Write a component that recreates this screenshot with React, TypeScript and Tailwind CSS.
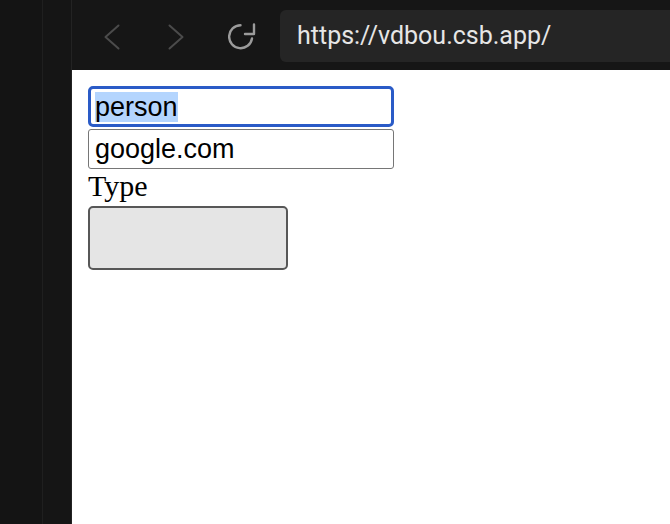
import React from 'react'

// Embedded-preview chrome: dark side rail, browser toolbar, and the page body
// with two text fields, a "Type" label and an empty select box.

function BackIcon() {
  return (
    <svg width="16" height="26" viewBox="0 0 16 26" fill="none" stroke="#4b4b4b" strokeWidth="2" strokeLinecap="round" strokeLinejoin="round">
      <polyline points="14.5,1.5 1.5,13 14.5,24.5" />
    </svg>
  )
}

function ForwardIcon() {
  return (
    <svg width="16" height="26" viewBox="0 0 16 26" fill="none" stroke="#4b4b4b" strokeWidth="2" strokeLinecap="round" strokeLinejoin="round">
      <polyline points="1.5,1.5 14.5,13 1.5,24.5" />
    </svg>
  )
}

function ReloadIcon() {
  return (
    <svg width="28" height="28" viewBox="0 0 28 28" fill="none" stroke="#9b9b9b" strokeWidth="2.4" strokeLinecap="round" strokeLinejoin="round">
      <path d="M12.5 2.2 A11.5 11.5 0 1 0 24 15.5" />
      <path d="M26 1.5 V11 H17" />
    </svg>
  )
}

export default function App() {
  return (
    <div className="flex w-[670px] h-[524px] overflow-hidden bg-white">
      {/* side rail */}
      <div className="flex shrink-0">
        <div className="w-[43px] bg-[#141414] border-r border-[#1f1f1f]" />
        <div className="w-[29px] bg-[#151515] border-r border-[#232323]" />
      </div>

      <div className="flex flex-col flex-1 min-w-0">
        {/* toolbar */}
        <div className="h-[70px] bg-[#161616] flex items-start pl-[32px] shrink-0">
          <div className="mt-[24px]"><BackIcon /></div>
          <div className="mt-[24px] ml-[48px]"><ForwardIcon /></div>
          <div className="mt-[23px] ml-[44px]"><ReloadIcon /></div>
          <div className="ml-[24px] mt-[10px] h-[52px] flex-1 rounded-l-[6px] bg-[#252525] flex items-center pl-[17px]">
            <span className="text-[25px] text-[#e6e6e6] font-['Roboto',sans-serif] whitespace-nowrap">
              https://vdbou.csb.app/
            </span>
          </div>
        </div>

        {/* page */}
        <div className="flex-1 bg-white pl-[16px] pt-[16px] font-['Liberation_Sans',Arial,sans-serif] text-black">
          <div className="w-[306px] h-[41px] border-[3px] border-[#2a5bc7] rounded-[5px] flex items-center pl-[4px]">
            <span className="text-[27px] leading-[30px] bg-[#b4d5fe]">person</span>
          </div>
          <div className="mt-[2px] w-[306px] h-[40px] border-[1.5px] border-[#767676] rounded-[3px] flex items-center pl-[6px]">
            <span className="text-[27px] leading-[30px]">google.com</span>
          </div>
          <div className="text-[30px] leading-[33px] font-['Liberation_Serif','Times_New_Roman',serif]">Type</div>
          <div className="mt-[4px] w-[200px] h-[64px] bg-[#e5e5e5] border-2 border-[#575757] rounded-[5px]" />
        </div>
      </div>
    </div>
  )
}
